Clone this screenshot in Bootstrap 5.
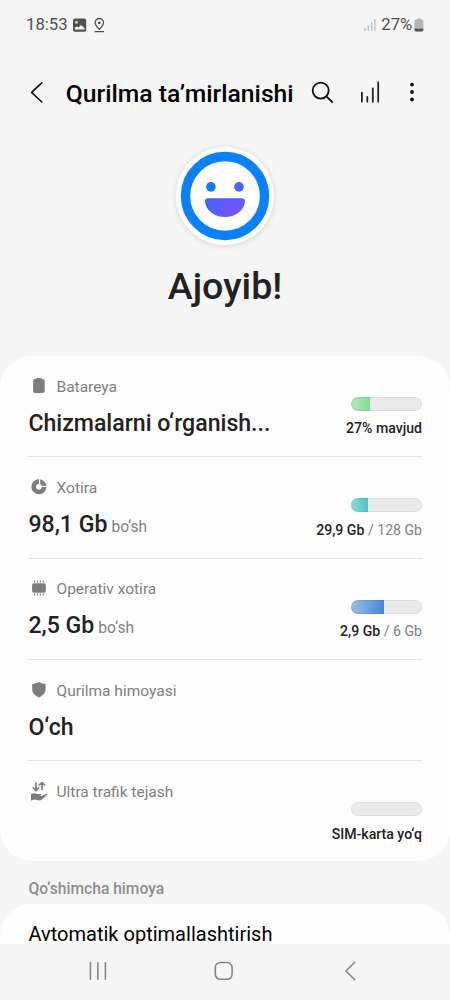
<!DOCTYPE html>
<html lang="uz">
<head>
<meta charset="utf-8">
<meta name="viewport" content="width=device-width, initial-scale=1">
<title>Qurilma ta’mirlanishi</title>
<link href="https://cdn.jsdelivr.net/npm/bootstrap@5.3.0/dist/css/bootstrap.min.css" rel="stylesheet">
<style>
  body { background: #f5f5f5; color: #222; font-family: Roboto, "Noto Sans", sans-serif; }
  svg { display: block; flex: none; }
  .screen { height: 1000px; }
  .status-bar { height: 49px; padding: 0 26px; font-size: 16.7px; line-height: 20px; color: #505050; }
  .status-bar > span { padding-top: 1px; }
  .app-bar { height: 88.6px; padding: 0 28px; }
  .app-title { font-size: 24.7px; line-height: 30px; font-weight: 500; color: #000; padding-top: 1px; }
  .hero { height: 218.4px; padding-top: 9.4px; }
  .face { width: 98px; height: 98px; background: #fdfdfd; box-shadow: 0 1px 6px rgba(0,0,0,.12); }
  .hero-text { font-size: 37.6px; line-height: 44px; font-weight: 500; margin-top: 19px; }
  .panel { background: #fdfdfd; border-radius: 32px; padding: 0 28px; height: 505px; }
  .care-row { height: 101.2px; padding-top: 20.7px; }
  .care-row:first-child { height: 100.4px; }
  .care-row + .care-row { border-top: 1px solid #e6e6e6; padding-top: 20.9px; }
  .row-label { height: 20px; font-size: 15.5px; line-height: 20px; color: #808080; gap: 6.5px; }
  .row-value { font-size: 23.1px; line-height: 28px; font-weight: 500; margin-top: 12.9px; padding-left: .4px; white-space: nowrap; }
  .row-value span { font-size: 15.6px; font-weight: 400; color: #808080; margin-left: 4px; }
  .meter-side { padding-top: 20.2px; font-size: 14.1px; line-height: 20px; font-weight: 500; white-space: nowrap; }
  .meter-side span { font-weight: 400; color: #808080; }
  .meter { width: 71px; height: 14px; border-radius: 7px; background: #eaeaea; margin-bottom: 7.5px; overflow: hidden; position: relative; }
  .meter::after { content: ""; position: absolute; inset: 0; border: 1px solid rgba(0,0,0,.06); border-radius: 7px; }
  .meter div { height: 100%; }
  .fill-battery { background: linear-gradient(90deg, #b3e9ba, #83dc93); }
  .fill-storage { background: linear-gradient(90deg, #8edbd8, #50c3c2); }
  .fill-memory { background: linear-gradient(90deg, #9abfe9, #4688d3); }
  .section-title { height: 43px; padding: 18px 28px 0 28.4px; font-size: 15.6px; line-height: 20px; font-weight: 500; color: #8c8c8c; }
  .next-panel { height: 40px; background: #fdfdfd; border-radius: 32px 32px 0 0; padding: 18.2px 28px 0 28.4px; font-size: 20.05px; line-height: 24px; color: #000; overflow: hidden; }
  .nav-keys { height: 56px; background: #f5f5f5; }
</style>
<script src="https://cdn.jsdelivr.net/npm/bootstrap@5.3.0/dist/js/bootstrap.bundle.min.js"></script>
</head>
<body>
<div class="screen d-flex flex-column overflow-hidden">
  <div class="status-bar d-flex align-items-center flex-shrink-0">
    <span>18:53</span>
    <svg width="40" height="20" viewBox="0 0 40 20" style="margin-left:2.3px">
      <path fill="#505050" fill-rule="evenodd" d="M5 3.6h9.2a2 2 0 0 1 2 2v9.2a2 2 0 0 1-2 2H5a2 2 0 0 1-2-2V5.600a2 2 0 0 1 2-2zM4.800 12.800v1.700h9.800v-1.300l-3.600-3.300-2.500 2.600-1.400-1.100zM6.400 6a1.300 1.300 0 1 0 .01 0z"/>
      <g fill="none" stroke="#505050" stroke-width="1.3"><path d="M29.300 14.200c-2.600-2.500-4.200-4.300-4.200-6.500a4.200 4.200 0 0 1 8.400 0c0 2.200-1.600 4-4.200 6.500zM24.500 16.600h9.600"/></g>
      <circle cx="29.3" cy="7.8" r="1.4" fill="#505050"/>
    </svg>
    <svg class="ms-auto" width="12" height="12" viewBox="0 0 12 12" style="margin-right:5.5px">
      <path stroke="#bdbdbd" stroke-width="1.3" d="M1 9v3M4.300 6v6M7.600 3.200V12M10.900 0v12"/>
    </svg>
    <span>27%</span>
    <svg width="10" height="14" viewBox="0 0 10 14" style="margin:0 .2px 0 1.5px">
      <path fill="#b5b5b5" d="M3 .4h4v1.200h.8a1.600 1.600 0 0 1 1.600 1.600V10.500H.4V3.200A1.600 1.600 0 0 1 2 1.600h1z"/>
      <path fill="#505050" d="M.4 10.500h9V12a1.400 1.400 0 0 1-1.400 1.400H1.800A1.400 1.400 0 0 1 .4 12z"/>
    </svg>
  </div>

  <header class="app-bar d-flex align-items-center flex-shrink-0">
    <svg width="20" height="24" viewBox="0 0 20 24"><path d="M13.800 1.800 3.600 11.300l10.200 9.700" fill="none" stroke="#111" stroke-width="1.7" stroke-linecap="round" stroke-linejoin="round"/></svg>
    <h1 class="app-title mb-0 text-nowrap" style="margin-left:17.7px">Qurilma ta’mirlanishi</h1>
    <svg class="ms-auto" width="112" height="24" viewBox="310 81 112 24">
      <g fill="none" stroke="#111" stroke-width="1.8" stroke-linecap="round"><circle cx="320.7" cy="90.6" r="8"/><path d="m326.600 96.600 5.600 5.400"/></g>
      <path stroke="#222" stroke-width="1.8" stroke-linecap="round" d="M361.900 92.700v9M367.300 97v4.700M372.800 88.400v13.300M378.200 82.500v19.200"/>
      <g fill="#111"><circle cx="412" cy="84.6" r="1.9"/><circle cx="412" cy="92" r="1.9"/><circle cx="412" cy="99.5" r="1.9"/></g>
    </svg>
  </header>

  <section class="hero d-flex flex-column align-items-center flex-shrink-0">
    <div class="face rounded-circle flex-shrink-0">
      <svg width="98" height="98" viewBox="0 0 98 98">
        <defs>
          <radialGradient id="smile" gradientUnits="userSpaceOnUse" cx="58" cy="63" r="46">
            <stop offset="0" stop-color="#7553fa"/><stop offset=".6" stop-color="#4763fa"/><stop offset="1" stop-color="#2f70fa"/>
          </radialGradient>
        </defs>
        <circle cx="49" cy="49" r="39.5" fill="none" stroke="#0881fb" stroke-width="9.4"/>
        <circle cx="34.9" cy="39.9" r="4.8" fill="#1878f8"/>
        <circle cx="63" cy="39.9" r="4.8" fill="#4865f8"/>
        <path fill="url(#smile)" d="M32 51.300h34q3 0 3 2.900c-.5 8.900-9.600 15.900-20 15.900s-19.500-7-20-15.900q0-2.900 3-2.900z"/>
      </svg>
    </div>
    <div class="hero-text">Ajoyib!</div>
  </section>

  <main class="panel flex-shrink-0">
    <div class="care-row d-flex justify-content-between">
      <div>
        <div class="row-label d-flex"><svg width="22" height="20" viewBox="0 0 22 20"><path fill="#7d7d7d" d="M8.200 1.500q.3-.6 1-.6h3.400q.7 0 1 .6l.2.600h.8a2.100 2.100 0 0 1 2.100 2.100v9.800a2.100 2.100 0 0 1-2.100 2.100H7.200a2.100 2.100 0 0 1-2.100-2.100V4.200a2.100 2.100 0 0 1 2.100-2.100H8z"/></svg>Batareya</div>
        <div class="row-value">Chizmalarni o‘rganish...</div>
      </div>
      <div class="meter-side d-flex flex-column align-items-end">
        <div class="meter"><div class="fill-battery" style="width:27%"></div></div>
        <div>27% mavjud</div>
      </div>
    </div>
    <div class="care-row d-flex justify-content-between">
      <div>
        <div class="row-label d-flex"><svg width="22" height="20" viewBox="0 0 22 20"><circle cx="10.9" cy="8.8" r="5.2" fill="none" stroke="#7d7d7d" stroke-width="4.6"/><path d="M11.600 0v8.300H20" fill="none" stroke="#fdfdfd" stroke-width="1.2"/></svg>Xotira</div>
        <div class="row-value">98,1 Gb<span>bo‘sh</span></div>
      </div>
      <div class="meter-side d-flex flex-column align-items-end">
        <div class="meter"><div class="fill-storage" style="width:24%"></div></div>
        <div>29,9 Gb <span>/ 128 Gb</span></div>
      </div>
    </div>
    <div class="care-row d-flex justify-content-between">
      <div>
        <div class="row-label d-flex"><svg width="22" height="20" viewBox="0 0 22 20"><rect x="4.1" y="4.2" width="13.7" height="9.6" rx="1.8" fill="#7d7d7d"/><path stroke="#7d7d7d" stroke-width="1.1" d="M6.500 1.500v1.900M9.400 1.500v1.900M12.400 1.500v1.900M15.300 1.500v1.900M6.500 14.600v1.900M9.400 14.600v1.900M12.400 14.600v1.900M15.300 14.600v1.900"/></svg>Operativ xotira</div>
        <div class="row-value">2,5 Gb<span>bo‘sh</span></div>
      </div>
      <div class="meter-side d-flex flex-column align-items-end">
        <div class="meter"><div class="fill-memory" style="width:47%"></div></div>
        <div>2,9 Gb <span>/ 6 Gb</span></div>
      </div>
    </div>
    <div class="care-row">
      <div class="row-label d-flex"><svg width="22" height="20" viewBox="0 0 22 20"><path fill="#7d7d7d" d="M10.900 1c2 1.200 4.200 1.800 6.700 2v5.300c0 3.700-2.700 6.500-6.700 8.300-4-1.800-6.700-4.600-6.700-8.300V3c2.500-.2 4.700-.8 6.700-2z"/></svg>Qurilma himoyasi</div>
      <div class="row-value">O‘ch</div>
    </div>
    <div class="care-row d-flex justify-content-between">
      <div class="row-label d-flex"><svg width="22" height="20" viewBox="0 0 22 20"><path d="M8 .4v8M4.900 5.300 8 8.500l3.100-3.200M14 8.200V.6M10.900 3.500 14 .3l3.100 3.200" fill="none" stroke="#7d7d7d" stroke-width="1.7"/><path fill="#7d7d7d" d="M3 12c2.400-.9 4.200-.9 6-.1l3.400.2c.9 0 1.100 1 .3 1.300l-2 .5 2.600.1 4.600-2.100c1-.4 1.700.7.900 1.400l-4.600 3.900c-1.400 1.200-3 1.300-4.800 1L7 17.600l-4 .8z"/></svg>Ultra trafik tejash</div>
      <div class="meter-side d-flex flex-column align-items-end">
        <div class="meter"></div>
        <div>SIM-karta yo‘q</div>
      </div>
    </div>
  </main>

  <div class="section-title flex-shrink-0">Qo‘shimcha himoya</div>
  <div class="next-panel flex-shrink-0">Avtomatik optimallashtirish</div>

  <nav class="nav-keys flex-shrink-0">
    <svg width="450" height="56" viewBox="0 0 450 56" fill="none" stroke="#868686" stroke-width="1.6" stroke-linecap="round" stroke-linejoin="round">
      <path d="M90.400 18.700v16.600M97.900 18.700v16.600M105.400 18.700v16.600"/>
      <rect x="215.3" y="18.5" width="16.8" height="16.8" rx="5"/>
      <path d="M354.800 18.300 345.900 27l8.900 8.700"/>
    </svg>
  </nav>
</div>
</body>
</html>
